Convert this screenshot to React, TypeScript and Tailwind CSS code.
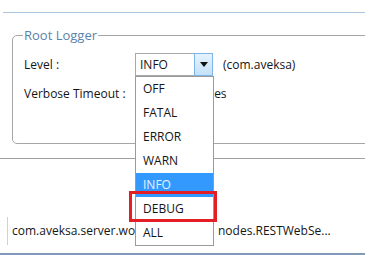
import React from "react";

const levels = ["OFF", "FATAL", "ERROR", "WARN", "INFO", "DEBUG", "ALL"];

const App: React.FC = () => {
  const selected = "INFO";

  return (
    <div
      className="relative w-[377px] h-[255px] bg-white overflow-hidden text-[12px] text-[#151515]"
      style={{ fontFamily: '"Open Sans", "Noto Sans", sans-serif' }}
    >
      <div className="w-[365px] h-full overflow-hidden pt-[12px]">
        <div className="ml-[3px] h-px bg-[#a9c4dc]" />

        <fieldset className="ml-[12px] mt-[14px] w-[380px] h-[117px] border border-[#a6a6a6] rounded-[5px] px-[11px]">
          <legend className="ml-[-1px] px-[1px] text-[13px] leading-[17px] text-[#5b82aa]">Root Logger</legend>

          <div className="flex items-center h-[23px] mt-[9px]">
            <span className="w-[111px]">Level :</span>
            <div className="flex w-[78px] h-[23px] border border-[#a9a9a9] bg-white">
              <span className="flex-1 pl-[4px] leading-[21px]">{selected}</span>
              <span className="flex items-center justify-center w-[19px] -my-px -mr-px border border-[#7eb4ea] bg-gradient-to-b from-[#e5f3fd] to-[#c4e1f7]">
                <svg width="8" height="5" viewBox="0 0 8 5">
                  <path d="M0 0H8L4 5Z" fill="#111" />
                </svg>
              </span>
            </div>
            <span className="ml-[10px]">(com.aveksa)</span>
          </div>

          <div className="flex items-center h-[20px] mt-[8px]">
            <span className="w-[111px]">Verbose Timeout :</span>
            <input className="w-[40px] h-[20px] border border-[#a9a9a9]" defaultValue="30" />
            <span className="ml-[6px]">minutes</span>
          </div>
        </fieldset>

        <div className="mt-[14px] h-px bg-[#a0a0a0]" />

        <div className="mt-[58px] ml-[7px] h-[28px] border-l border-[#d0d0d0] flex items-center pl-[4px] whitespace-nowrap">
          <span className="inline-block w-[206px] overflow-hidden">com.aveksa.server.workflow.tasks.</span>
          <span>nodes.RESTWebSe...</span>
        </div>

        <div className="mt-[8px] h-[2px] bg-[#7f9bb8]" />
      </div>

      {/* open dropdown list */}
      <ul className="absolute left-[135px] top-[76px] w-[79px] border border-[#9a9a9a] bg-white py-0">
        {levels.map((lv) => (
          <li
            key={lv}
            className={
              lv === selected
                ? "h-[24px] leading-[24px] pl-[7px] bg-[#3399ff] text-[#e6f2ff]"
                : "h-[24px] leading-[24px] pl-[7px]"
            }
          >
            {lv}
          </li>
        ))}
      </ul>

      {/* highlight box */}
      <div className="absolute left-[129px] top-[191px] w-[88px] h-[31px] border-[3px] border-[#e31e24]" />
    </div>
  );
};

export default App;
